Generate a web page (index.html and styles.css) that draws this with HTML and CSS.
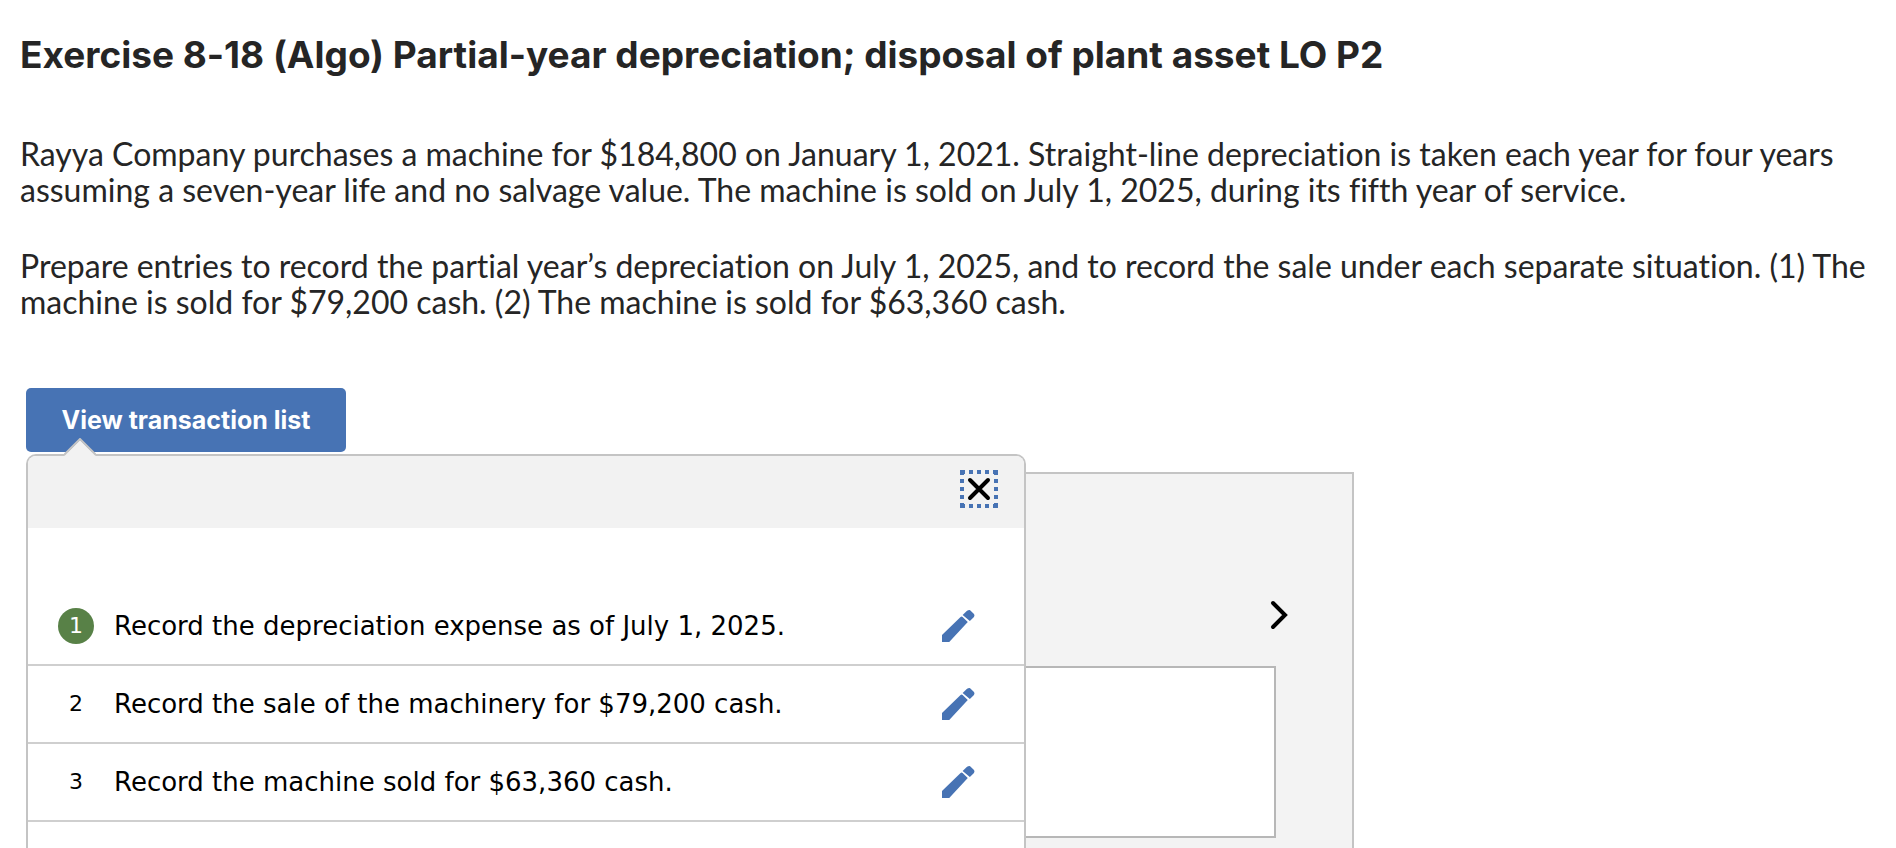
FILE: index.html
```html
<!DOCTYPE html>
<html lang="en">
<head>
  <meta charset="UTF-8">
  <title>Exercise 8-18 (Algo)</title>
  <link rel="stylesheet" href="styles.css">
</head>
<body>

  <!-- Question text -->
  <section class="question">
    <h1>Exercise 8-18 (Algo) Partial-year depreciation; disposal of plant asset LO P2</h1>
    <p>Rayya Company purchases a machine for $184,800 on January 1, 2021. Straight-line depreciation is taken each year for four years<br>
      assuming a seven-year life and no salvage value. The machine is sold on July 1, 2025, during its fifth year of service.</p>
    <p>Prepare entries to record the partial year’s depreciation on July 1, 2025, and to record the sale under each separate situation. (1) The<br>
      machine is sold for $79,200 cash. (2) The machine is sold for $63,360 cash.</p>
  </section>

  <main class="journal">
    <button class="view-list" type="button">View transaction list</button>

    <!-- Worksheet behind the popup -->
    <div class="worksheet">
      <button class="next" type="button" aria-label="Next">
        <svg width="20" height="32" viewBox="0 0 20 32">
          <path d="M3 3L15 15L3 27" fill="none" stroke="#000" stroke-width="4" stroke-linecap="round"/>
        </svg>
      </button>
      <div class="entry"></div>

      <!-- Transaction list popup -->
      <div class="popup">
        <svg class="arrow" width="32" height="20" viewBox="0 0 32 20">
          <path d="M0 20V18L16 2L32 18V20Z" fill="#f2f2f2"/>
          <path d="M0 17L16 1L32 17" fill="none" stroke="#c4c4c4" stroke-width="2"/>
        </svg>
        <div class="popup-header">
          <button class="close" type="button" aria-label="Close">
            <svg width="38" height="38" viewBox="0 0 38 38">
              <path d="M0 2H38M0 36H38M2 0V38M36 0V38" stroke="#4773b4" stroke-width="4" stroke-dasharray="5 4 4 4 4 4 4 4 5 0"/>
              <path d="M10 10L28 28M28 10L10 28" stroke="#000" stroke-width="4" stroke-linecap="round"/>
            </svg>
          </button>
        </div>
        <ol class="transactions">
          <li>
            <span class="number active">1</span>
            <span class="text">Record the depreciation expense as of July 1, 2025.</span>
            <button class="edit" type="button" aria-label="Edit transaction 1">
              <svg width="33" height="32" viewBox="0 0 32 32" preserveAspectRatio="none"><path d="M0 25L18 7Q19 6 20 7L25 12L7 32H0ZM20 5L24 1Q25 0 27 0L31 4Q32 5 31 7L27 11Z"/></svg>
            </button>
          </li>
          <li>
            <span class="number">2</span>
            <span class="text">Record the sale of the machinery for $79,200 cash.</span>
            <button class="edit" type="button" aria-label="Edit transaction 2">
              <svg width="33" height="32" viewBox="0 0 32 32" preserveAspectRatio="none"><path d="M0 25L18 7Q19 6 20 7L25 12L7 32H0ZM20 5L24 1Q25 0 27 0L31 4Q32 5 31 7L27 11Z"/></svg>
            </button>
          </li>
          <li>
            <span class="number">3</span>
            <span class="text">Record the machine sold for $63,360 cash.</span>
            <button class="edit" type="button" aria-label="Edit transaction 3">
              <svg width="33" height="32" viewBox="0 0 32 32" preserveAspectRatio="none"><path d="M0 25L18 7Q19 6 20 7L25 12L7 32H0ZM20 5L24 1Q25 0 27 0L31 4Q32 5 31 7L27 11Z"/></svg>
            </button>
          </li>
        </ol>
      </div>
    </div>
  </main>

</body>
</html>
```
FILE: styles.css
```css
* {
  box-sizing: border-box;
}

body {
  margin: 0;
  height: 100vh;
  overflow: hidden;
  display: flex;
  flex-direction: column;
  background: #fff;
  color: #252525;
  font-family: Lato, sans-serif;
  font-variant-ligatures: none;
}

.question {
  padding: 32px 20px 0;
}

h1 {
  margin: 0 0 58px;
  font-family: Inter, sans-serif;
  font-size: 37px;
  line-height: 46px;
  font-weight: bold;
}

p {
  margin: 0 0 40px;
  font-size: 32px;
  line-height: 36px;
  white-space: nowrap;
}

button {
  padding: 0;
  border: none;
  background: none;
  cursor: pointer;
}

button svg {
  display: block;
}

.journal {
  flex: 1;
  display: flex;
  flex-direction: column;
  align-items: flex-start;
  padding: 28px 26px 0;
}

.view-list {
  width: 320px;
  height: 64px;
  border-radius: 5px;
  background: #4773b4;
  color: #fff;
  font-family: Inter, sans-serif;
  font-size: 25px;
  font-weight: bold;
}

.worksheet {
  position: relative;
  flex: 1;
  width: 100%;
  max-width: 1328px;
  margin-top: 20px;
  padding: 126px 76px 0;
  border: 2px solid #c4c4c4;
  border-bottom: none;
  background: #f3f3f3;
}

.next {
  display: block;
  margin: 0 -14px 34px auto;
}

.entry {
  height: 172px;
  border: 2px solid #b7b7b7;
  background: #fff;
}

.popup {
  position: absolute;
  top: -20px;
  left: -2px;
  bottom: 0;
  width: 1000px;
  border: 2px solid #c4c4c4;
  border-bottom: none;
  border-radius: 10px 10px 0 0;
  background: #fff;
}

.arrow {
  position: absolute;
  top: -18px;
  left: 36px;
}

.popup-header {
  display: flex;
  justify-content: flex-end;
  align-items: flex-start;
  height: 72px;
  padding: 14px 26px;
  border-radius: 8px 8px 0 0;
  background: #f2f2f2;
}

.transactions {
  margin: 0;
  padding: 60px 0 0;
  list-style: none;
  color: #000;
  font-family: "DejaVu Sans", sans-serif;
}

.transactions li {
  display: flex;
  align-items: center;
  height: 78px;
  padding: 0 49px 0 30px;
  border-bottom: 2px solid #cfcfcf;
}

.number {
  width: 36px;
  margin-right: 20px;
  border-radius: 50%;
  font-size: 22px;
  line-height: 36px;
  text-align: center;
}

.active {
  background: #588147;
  color: #fff;
}

.text {
  flex: 1;
  font-size: 26px;
}

.edit svg {
  fill: #4773b4;
}
```
